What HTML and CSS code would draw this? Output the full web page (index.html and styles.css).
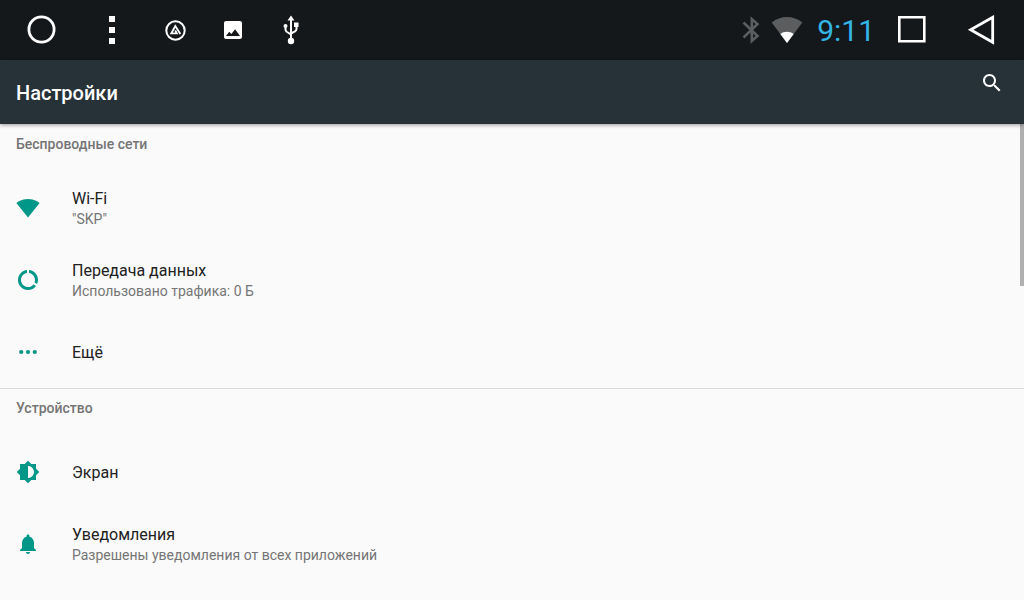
FILE: index.html
```html
<!DOCTYPE html>
<html lang="ru">
<head>
    <meta charset="UTF-8">
    <meta name="viewport" content="width=device-width, initial-scale=1">
    <title>Настройки</title>
    <link rel="stylesheet" href="styles.css">
</head>
<body>
<div class="statusbar">
    <div class="nav">
        <button type="button" aria-label="Домой">
            <svg width="30" height="30" viewBox="0 0 30 30"><circle cx="14.5" cy="14.5" r="12.6" fill="none" stroke="#fff" stroke-width="2.8"/></svg>
        </button>
        <button type="button" aria-label="Меню">
            <svg width="30" height="30" viewBox="0 0 30 30"><path fill="#fff" d="M12 1h6v6h-6zM12 12h6v6h-6zM12 23h6v6h-6z"/></svg>
        </button>
    </div>
    <div class="notices">
        <svg width="24" height="24" viewBox="0 0 24 24" fill="none" stroke="#fff">
            <circle cx="12.5" cy="12.5" r="9.2" stroke-width="2"/>
            <path stroke-width="1.9" d="M17.400 15.900L12.300 8L8.300 15.400H13.800L12.200 12.400"/>
        </svg>
        <svg width="24" height="24" viewBox="0 0 24 24" fill="#fff"><path d="M21 19V5c0-1.100-.9-2-2-2H5c-1.100 0-2 .9-2 2v14c0 1.100.9 2 2 2h14c1.100 0 2-.9 2-2zM5 18l3.200-4.300 2.200 2.200 3.700-4.700L19 18z"/></svg>
        <svg width="24" height="32" viewBox="0 0 24 32">
            <g fill="none" stroke="#fff" stroke-width="2">
                <path d="M12 5V27"/>
                <path d="M6.500 12V15.500Q6.500 17 8 18L12 20.500"/>
                <path d="M17.500 11V15Q17.500 16.500 16 17.300L12 19.500"/>
            </g>
            <path fill="#fff" d="M12 1.500l3.500 5h-7zM15 8.500h4.500v4.500h-4.500z"/>
            <circle cx="6.500" cy="12" r="2" fill="#fff"/>
            <circle cx="12" cy="27" r="3.200" fill="#fff"/>
        </svg>
    </div>
    <div class="system">
        <svg width="24" height="32" viewBox="0 0 24 32"><path fill="none" stroke="#5b5d5f" stroke-width="2.600" d="M4.500 8.500L18.500 22L12.800 27V5L18.500 10L4.500 23.500"/></svg>
        <svg width="32" height="32" viewBox="0 0 32 32">
            <path fill="#5b5d5f" d="M16 29L.7 8.500Q7.500 3 16 3T31.300 8.500z"/>
            <path fill="#fff" d="M16 29L9.300 20Q12 17.700 16 17.700T22.700 20z"/>
        </svg>
        <span class="clock">9:11</span>
    </div>
    <div class="nav">
        <button type="button" aria-label="Недавние">
            <svg width="30" height="30" viewBox="0 0 30 30"><path fill="none" stroke="#fff" stroke-width="2.600" d="M2.300 2.300h25v24h-25z"/></svg>
        </button>
        <button type="button" aria-label="Назад">
            <svg width="30" height="30" viewBox="0 0 30 30"><path fill="none" stroke="#fff" stroke-width="2.800" d="M25.700 2.300v25L3.600 14.800z"/></svg>
        </button>
    </div>
</div>

<header class="appbar">
    <h1>Настройки</h1>
    <button type="button" class="search" aria-label="Поиск">
        <svg width="24" height="24" viewBox="0 0 24 24" fill="#fff"><path d="M15.500 14h-.79l-.28-.27C15.410 12.590 16 11.110 16 9.500 16 5.910 13.090 3 9.500 3S3 5.910 3 9.500 5.910 16 9.500 16c1.610 0 3.090-.59 4.230-1.570l.27.28v.79l5 4.990L20.490 19l-4.990-5zm-6 0C7.010 14 5 11.990 5 9.500S7.010 5 9.500 5 14 7.010 14 9.500 11.990 14 9.500 14z"/></svg>
    </button>
</header>

<main class="settings">
    <section>
        <h2>Беспроводные сети</h2>
        <ul>
            <li><a href="#wifi">
                <svg width="24" height="24" viewBox="0 0 24 24"><path d="M12.010 21.490L23.640 7c-.45-.34-4.930-4-11.640-4C5.280 3 .81 6.660.36 7l11.630 14.490.01.010.01-.010z"/></svg>
                <span class="text">
                    <span class="name">Wi-Fi</span>
                    <span class="info">"SKP"</span>
                </span>
            </a></li>
            <li><a href="#data">
                <svg width="24" height="24" viewBox="0 0 24 24"><path d="M13 2.050v3.030c3.390.49 6 3.390 6 6.920 0 .9-.18 1.750-.48 2.540l2.600 1.530c.56-1.240.88-2.620.88-4.070 0-5.180-3.950-9.450-9-9.950zM12 19c-3.870 0-7-3.130-7-7 0-3.530 2.610-6.430 6-6.920V2.050c-5.060.5-9 4.760-9 9.950 0 5.520 4.470 10 9.990 10 3.310 0 6.240-1.610 8.060-4.090l-2.600-1.530C16.170 17.980 14.210 19 12 19z"/></svg>
                <span class="text">
                    <span class="name">Передача данных</span>
                    <span class="info">Использовано трафика: 0 Б</span>
                </span>
            </a></li>
            <li><a href="#more">
                <svg width="24" height="24" viewBox="0 0 24 24"><circle cx="5.200" cy="12" r="2.100"/><circle cx="12" cy="12" r="2.100"/><circle cx="18.800" cy="12" r="2.100"/></svg>
                <span class="text">
                    <span class="name">Ещё</span>
                </span>
            </a></li>
        </ul>
    </section>
    <section>
        <h2>Устройство</h2>
        <ul>
            <li><a href="#display">
                <svg width="24" height="24" viewBox="0 0 24 24"><path d="M20 15.310L23.310 12 20 8.690V4h-4.690L12 .69 8.690 4H4v4.690L.69 12 4 15.310V20h4.690L12 23.310 15.310 20H20v-4.690zM12 18V6c3.310 0 6 2.690 6 6s-2.690 6-6 6z"/></svg>
                <span class="text">
                    <span class="name">Экран</span>
                </span>
            </a></li>
            <li><a href="#notifications">
                <svg width="24" height="24" viewBox="0 0 24 24"><path d="M12 22c1.100 0 2-.9 2-2h-4c0 1.100.89 2 2 2zm6-6v-5c0-3.070-1.640-5.640-4.500-6.320V4c0-.83-.67-1.500-1.500-1.500s-1.500.67-1.500 1.500v.68C7.630 5.360 6 7.920 6 11v5l-2 2v1h16v-1l-2-2z"/></svg>
                <span class="text">
                    <span class="name">Уведомления</span>
                    <span class="info">Разрешены уведомления от всех приложений</span>
                </span>
            </a></li>
        </ul>
    </section>
    <div class="scroll"></div>
</main>
</body>
</html>
```
FILE: styles.css
```css
*{
    margin: 0;
    padding: 0;
    box-sizing: border-box;
}
body{
    display: flex;
    flex-direction: column;
    min-height: 100vh;
    background-color: #fafafa;
    color: #212121;
    font-family: Roboto, "Noto Sans", sans-serif;
}
svg{
    display: block;
    flex: none;
}
button{
    border: none;
    background: none;
    cursor: pointer;
}
ul{
    list-style: none;
}

/* status bar */
.statusbar{
    display: flex;
    align-items: center;
    height: 60px;
    padding: 0 27px;
    background-color: #14181b;
}
.nav{
    display: flex;
    gap: 40px;
}
.notices{
    display: flex;
    align-items: center;
    gap: 34px;
    margin-left: 36px;
}
.system{
    display: flex;
    align-items: center;
    gap: 8px;
    margin-left: auto;
    margin-right: 22px;
}
.clock{
    margin-left: 6px;
    padding-top: 2px;
    color: #33b5e5;
    font-size: 30px;
    line-height: 36px;
}

/* title bar */
.appbar{
    position: relative;
    z-index: 1;
    display: flex;
    align-items: center;
    justify-content: space-between;
    height: 64px;
    padding: 0 20px 0 16px;
    background-color: #263238;
    box-shadow: 0 1px 4px rgba(0, 0, 0, 0.4);
}
.appbar h1{
    padding-top: 2px;
    color: #fff;
    font-size: 20px;
    font-weight: 500;
    line-height: 24px;
}
.search{
    align-self: flex-start;
    padding-top: 11px;
}

/* list */
.settings{
    position: relative;
    flex: 1;
}
.settings section + section{
    box-shadow: inset 0 1px #d9d9d9;
}
.settings h2{
    padding: 0 16px 8px;
    color: #757575;
    font-size: 14px;
    font-weight: 500;
    line-height: 40px;
}
.settings a{
    display: flex;
    align-items: center;
    gap: 32px;
    height: 72px;
    padding: 0 16px;
    color: inherit;
    text-decoration: none;
}
.settings a svg{
    fill: #009688;
}
.text{
    display: flex;
    flex-direction: column;
}
.name{
    padding-top: 2px;
    font-size: 16px;
    line-height: 20px;
}
.info{
    color: #757575;
    font-size: 14px;
    line-height: 20px;
}
.scroll{
    position: absolute;
    top: 0;
    right: 0;
    width: 4px;
    height: 34%;
    background-color: #b0b0b0;
}
```
